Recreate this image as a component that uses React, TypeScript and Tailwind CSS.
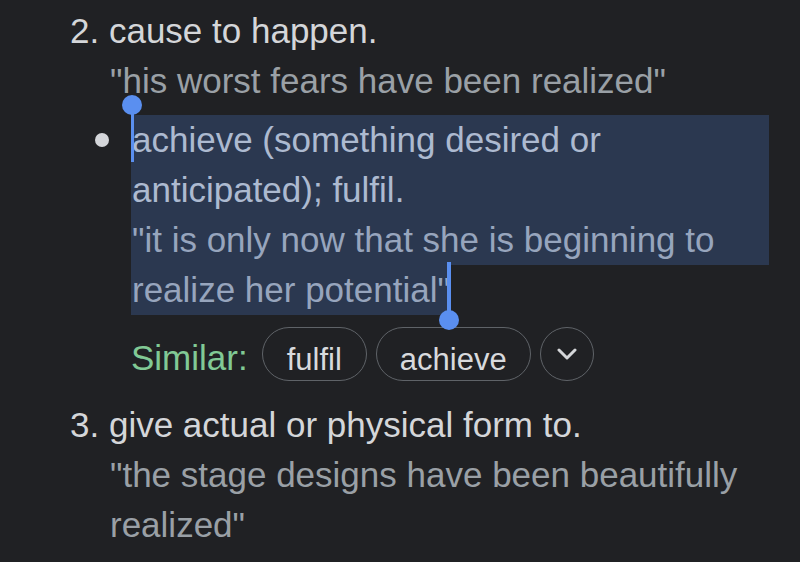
export default function App() {
  const font = { fontFamily: '"Liberation Sans", Arial, sans-serif' }

  return (
    <div
      style={font}
      className="w-[800px] h-[562px] overflow-hidden bg-[#202124] pl-[70px] pt-[6px] text-[35px] leading-[50px]"
    >
      {/* sense 2 */}
      <div className="text-[#d4d6d9] whitespace-nowrap">2. cause to happen.</div>
      <div className="pl-[40px] text-[#9aa0a6] whitespace-nowrap">"his worst fears have been realized"</div>

      {/* sub sense with selection */}
      <div className="mt-[9px] flex">
        <div className="w-[61px] shrink-0 flex justify-center pt-[18px] pl-[2px]">
          <div className="w-[14px] h-[14px] rounded-full bg-[#d4d6da]" />
        </div>
        <div className="relative whitespace-nowrap">
          <div className="w-[638px] bg-[#2b3850]">
            <div className="pl-[1px] text-[#adbad0]">achieve (something desired or</div>
            <div className="pl-[1px] text-[#adbad0]">anticipated); fulfil.</div>
            <div className="pl-[1px] text-[#97a5bd]">"it is only now that she is beginning to</div>
          </div>
          <div className="w-[317px] bg-[#2b3850] pl-[1px] text-[#97a5bd]">realize her potential"</div>

          {/* selection handles */}
          <div className="absolute left-[-9px] top-[-20px] w-[20px] h-[20px] rounded-full bg-[#5a8ff0]" />
          <div className="absolute left-[0px] top-[-10px] w-[3px] h-[57px] bg-[#5a8ff0]" />
          <div className="absolute left-[316px] top-[147px] w-[4px] h-[58px] bg-[#5a8ff0]" />
          <div className="absolute left-[308px] top-[195px] w-[20px] h-[20px] rounded-full bg-[#5a8ff0]" />

          {/* similar row */}
          <div className="mt-[12px] flex items-start">
            <span className="mt-[6px] text-[#81c995] mr-[14px]">Similar:</span>
            <div className="flex gap-[9px]">
              <div className="h-[54px] px-[24px] rounded-full border-[1.5px] border-[#5f6368] flex items-center pt-[10px] text-[31px] leading-[31px] text-[#d8dadd]">
                fulfil
              </div>
              <div className="h-[54px] px-[23px] rounded-full border-[1.5px] border-[#5f6368] flex items-center pt-[10px] text-[31px] leading-[31px] text-[#d8dadd]">
                achieve
              </div>
              <div className="w-[54px] h-[54px] rounded-full border-[1.5px] border-[#5f6368] flex items-center justify-center">
                <svg width="20" height="12" viewBox="0 0 20 12" fill="none">
                  <path d="M2 2l8 8 8-8" stroke="#d4d6d9" strokeWidth="3" strokeLinecap="round" strokeLinejoin="round" />
                </svg>
              </div>
            </div>
          </div>
        </div>
      </div>

      {/* sense 3 */}
      <div className="mt-[17px] text-[#d4d6d9] whitespace-nowrap">3. give actual or physical form to.</div>
      <div className="pl-[40px] text-[#9aa0a6] whitespace-nowrap">"the stage designs have been beautifully</div>
      <div className="pl-[40px] text-[#9aa0a6] whitespace-nowrap">realized"</div>
    </div>
  )
}
